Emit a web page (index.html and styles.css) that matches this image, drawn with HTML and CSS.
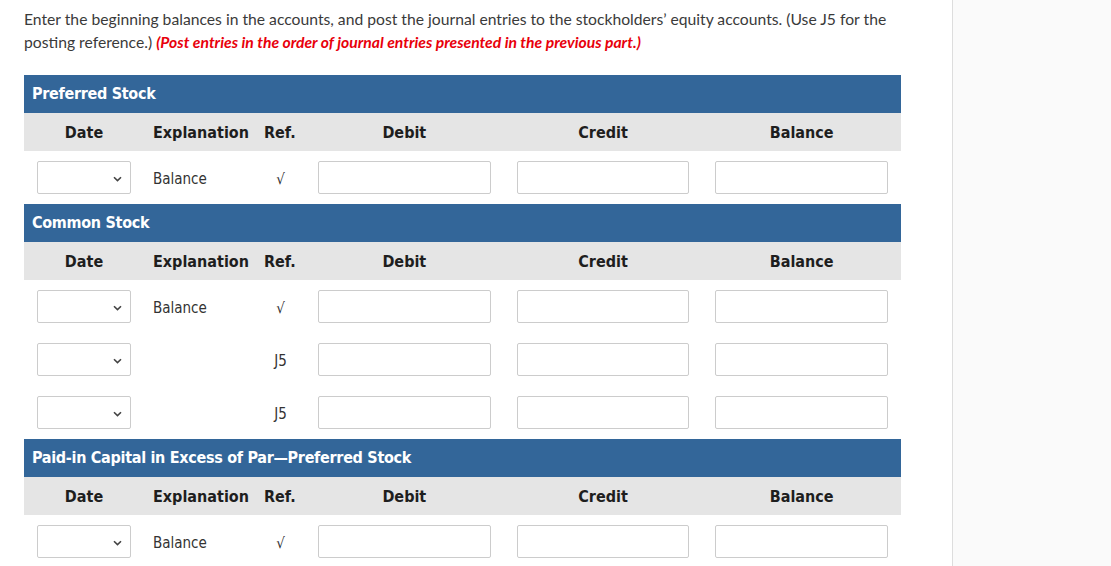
FILE: index.html
```html
<!DOCTYPE html>
<html lang="en">
<head>
    <meta charset="UTF-8">
    <title>Stockholders' Equity Accounts</title>
    <link rel="stylesheet" href="styles.css">
</head>
<body>
    <div class="page">
        <main class="content">
            <p class="instructions">
                Enter the beginning balances in the accounts, and post the journal entries to the stockholders’ equity accounts. (Use J5 for the posting reference.)
                <span class="note">(Post entries in the order of journal entries presented in the previous part.)</span>
            </p>

            <section class="ledger">
                <h2 class="ledger-title">Preferred Stock</h2>
                <div class="ledger-row ledger-head">
                    <div class="col-date">Date</div>
                    <div class="col-expl">Explanation</div>
                    <div class="col-ref">Ref.</div>
                    <div class="col-num">Debit</div>
                    <div class="col-num">Credit</div>
                    <div class="col-num">Balance</div>
                </div>
                <div class="ledger-row">
                    <div class="col-date"><div class="select-wrap"><select class="date-select"></select><svg class="chevron" width="9" height="6" viewBox="0 0 9 6"><path d="M1 1.2 L4.5 4.6 L8 1.2" fill="none" stroke="#444" stroke-width="1.6"/></svg></div></div>
                    <div class="col-expl">Balance</div>
                    <div class="col-ref">√</div>
                    <div class="col-num"><input type="text" class="amount"></div>
                    <div class="col-num"><input type="text" class="amount"></div>
                    <div class="col-num"><input type="text" class="amount"></div>
                </div>
            </section>

            <section class="ledger">
                <h2 class="ledger-title">Common Stock</h2>
                <div class="ledger-row ledger-head">
                    <div class="col-date">Date</div>
                    <div class="col-expl">Explanation</div>
                    <div class="col-ref">Ref.</div>
                    <div class="col-num">Debit</div>
                    <div class="col-num">Credit</div>
                    <div class="col-num">Balance</div>
                </div>
                <div class="ledger-row">
                    <div class="col-date"><div class="select-wrap"><select class="date-select"></select><svg class="chevron" width="9" height="6" viewBox="0 0 9 6"><path d="M1 1.2 L4.5 4.6 L8 1.2" fill="none" stroke="#444" stroke-width="1.6"/></svg></div></div>
                    <div class="col-expl">Balance</div>
                    <div class="col-ref">√</div>
                    <div class="col-num"><input type="text" class="amount"></div>
                    <div class="col-num"><input type="text" class="amount"></div>
                    <div class="col-num"><input type="text" class="amount"></div>
                </div>
                <div class="ledger-row">
                    <div class="col-date"><div class="select-wrap"><select class="date-select"></select><svg class="chevron" width="9" height="6" viewBox="0 0 9 6"><path d="M1 1.2 L4.5 4.6 L8 1.2" fill="none" stroke="#444" stroke-width="1.6"/></svg></div></div>
                    <div class="col-expl"></div>
                    <div class="col-ref">J5</div>
                    <div class="col-num"><input type="text" class="amount"></div>
                    <div class="col-num"><input type="text" class="amount"></div>
                    <div class="col-num"><input type="text" class="amount"></div>
                </div>
                <div class="ledger-row">
                    <div class="col-date"><div class="select-wrap"><select class="date-select"></select><svg class="chevron" width="9" height="6" viewBox="0 0 9 6"><path d="M1 1.2 L4.5 4.6 L8 1.2" fill="none" stroke="#444" stroke-width="1.6"/></svg></div></div>
                    <div class="col-expl"></div>
                    <div class="col-ref">J5</div>
                    <div class="col-num"><input type="text" class="amount"></div>
                    <div class="col-num"><input type="text" class="amount"></div>
                    <div class="col-num"><input type="text" class="amount"></div>
                </div>
            </section>

            <section class="ledger">
                <h2 class="ledger-title">Paid-in Capital in Excess of Par—Preferred Stock</h2>
                <div class="ledger-row ledger-head">
                    <div class="col-date">Date</div>
                    <div class="col-expl">Explanation</div>
                    <div class="col-ref">Ref.</div>
                    <div class="col-num">Debit</div>
                    <div class="col-num">Credit</div>
                    <div class="col-num">Balance</div>
                </div>
                <div class="ledger-row">
                    <div class="col-date"><div class="select-wrap"><select class="date-select"></select><svg class="chevron" width="9" height="6" viewBox="0 0 9 6"><path d="M1 1.2 L4.5 4.6 L8 1.2" fill="none" stroke="#444" stroke-width="1.6"/></svg></div></div>
                    <div class="col-expl">Balance</div>
                    <div class="col-ref">√</div>
                    <div class="col-num"><input type="text" class="amount"></div>
                    <div class="col-num"><input type="text" class="amount"></div>
                    <div class="col-num"><input type="text" class="amount"></div>
                </div>
            </section>
        </main>
        <aside class="side"></aside>
    </div>
</body>
</html>
```

FILE: styles.css
```css
html, body {
    margin: 0;
    height: 100%;
    overflow: hidden;
}

body {
    background-color: #fff;
    font-family: "DejaVu Sans", sans-serif;
    font-stretch: condensed;
    color: #333;
}

.page {
    display: flex;
    height: 100%;
}

.content {
    width: 877px;
    padding: 8px 51px 0 24px;
    border-right: 1px solid #ddd;
    flex-shrink: 0;
}

.side {
    flex: 1;
    background-color: #fafafa;
}

.instructions {
    margin: 0 0 21px;
    font-family: Lato, "Liberation Sans", sans-serif;
    font-stretch: normal;
    font-size: 15.7px;
    line-height: 23px;
    color: #3a3a3a;
}

.note {
    color: #e8000b;
    font-weight: bold;
    font-style: italic;
}

.ledger-title {
    margin: 0;
    height: 38px;
    line-height: 38px;
    padding-left: 8px;
    background-color: #336699;
    color: #fff;
    font-size: 16px;
    font-weight: bold;
    letter-spacing: -0.3px;
}

.ledger-row {
    display: grid;
    grid-template-columns: 120px 112px 49px 1fr 1fr 1fr;
    align-items: center;
    height: 53px;
    font-size: 15px;
}

.ledger-head {
    height: 38px;
    background-color: #e5e5e5;
    font-weight: bold;
    font-size: 16px;
    color: #1e1e1e;
}

.ledger-head .col-date,
.ledger-head .col-num {
    text-align: center;
}

.col-date {
    padding-left: 13px;
}

.ledger-head .col-date {
    padding-left: 0;
}

.col-expl {
    padding-left: 9px;
    white-space: nowrap;
}

.ledger-row .col-expl,
.ledger-row .col-ref {
    padding-top: 3px;
    color: #333;
}

.ledger-head .col-expl,
.ledger-head .col-ref {
    padding-top: 0;
    color: #1e1e1e;
}

.col-ref {
    text-align: center;
}

.ledger-head .col-ref {
    text-align: left;
    padding-left: 8px;
}

.col-num {
    padding: 0 13px;
}

.select-wrap {
    position: relative;
    width: 94px;
}

.date-select {
    display: block;
    width: 94px;
    height: 33px;
    border: 1px solid #ccc;
    border-radius: 2px;
    background-color: #fff;
    appearance: none;
    -webkit-appearance: none;
}

.chevron {
    position: absolute;
    right: 9px;
    top: 15px;
}

.amount {
    display: block;
    box-sizing: border-box;
    width: 100%;
    height: 33px;
    border: 1px solid #ccc;
    border-radius: 2px;
    background-color: #fff;
}
```
